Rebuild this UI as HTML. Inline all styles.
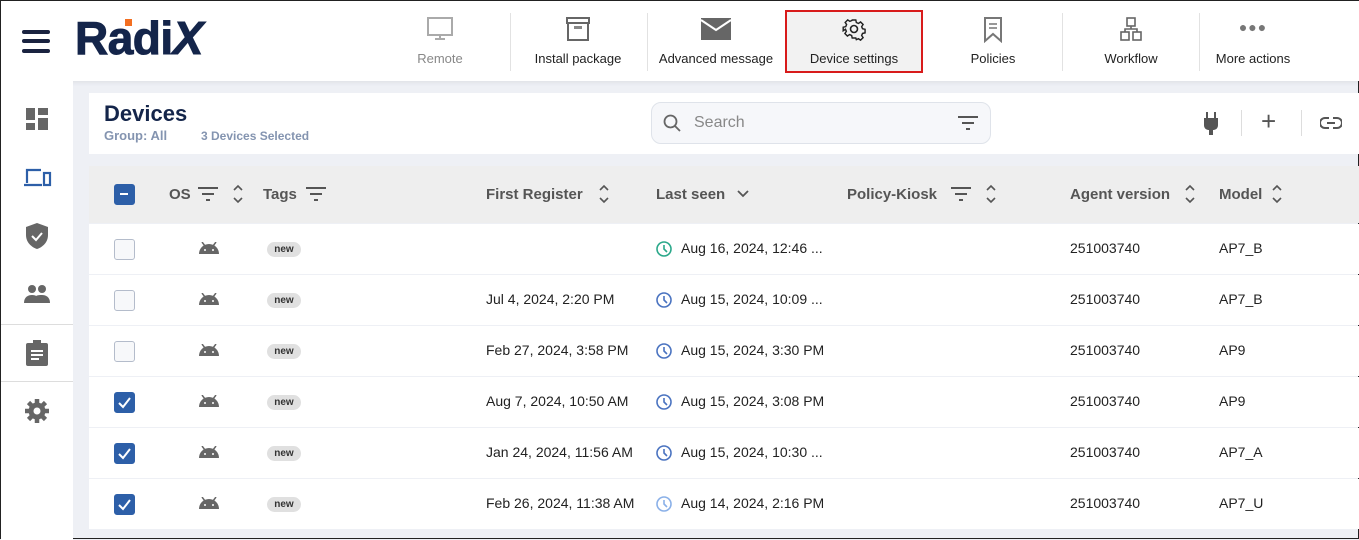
<!DOCTYPE html>
<html><head><style>
*{box-sizing:border-box;margin:0;padding:0}
body{width:1359px;height:539px;overflow:hidden;background:#eef0f5;font-family:"Liberation Sans",sans-serif;position:relative;border:1px solid #222}
.abs{position:absolute}
.top{left:0;top:0;width:1359px;height:80px;background:#fff;box-shadow:0 2px 4px rgba(0,0,0,.06)}
.nav{top:0;height:80px;text-align:center;font-size:13px;color:#222}
.nav span{position:absolute;top:50px;left:0;right:0}
.sep{top:12px;width:1px;height:58px;background:#e2e2e2}
.side{left:0;top:80px;width:72px;height:459px;background:#fff}
.card{left:88px;top:92px;width:1271px;height:61px;background:#fff}
.thead{left:88px;top:165px;width:1271px;height:57px;background:#eeeeee}
.th{top:185px;font-size:15px;font-weight:bold;color:#555}
.row{left:88px;width:1271px;height:50px;background:#fff}
.cell{font-size:14px;color:#222}
.cb{width:21px;height:21px;border:1.5px solid #b4bccb;border-radius:3px;background:#f7f8fa}
.cbc{background:#2d5fa8;border-color:#2d5fa8}
.badge{width:34px;height:15px;border-radius:8px;background:#e0e0e0;font-size:10px;font-weight:bold;text-align:center;line-height:15px;color:#333}
</style></head><body>
<div class="abs top"></div>
<div class="abs" style="left:21px;top:29px;width:28px;height:4px;background:#1a2340;border-radius:2px"></div>
<div class="abs" style="left:21px;top:38px;width:28px;height:4px;background:#1a2340;border-radius:2px"></div>
<div class="abs" style="left:21px;top:48px;width:28px;height:4px;background:#1a2340;border-radius:2px"></div>
<div class="abs" style="left:74px;top:12px;font-size:46px;line-height:50px;font-weight:bold;color:#14254a;letter-spacing:-0.5px;-webkit-text-stroke:1px #14254a">Radi<span style="font-style:italic">X</span></div>
<div class="abs" style="left:124px;top:18px;width:7px;height:7px;background:#f36f21"></div>

<div class="abs nav" style="left:379px;width:120px;color:#888"><svg class="abs" style="left:47px;top:16px" width="26" height="24" viewBox="0 0 26 24"><rect x="1" y="1" width="24" height="17" fill="none" stroke="#aaa" stroke-width="2"/><rect x="12" y="18" width="2" height="4" fill="#aaa"/><rect x="8" y="21" width="10" height="2" fill="#aaa"/></svg><span>Remote</span></div>
<div class="abs sep" style="left:509px"></div>
<div class="abs nav" style="left:517px;width:120px"><svg class="abs" style="left:48px;top:16px" width="24" height="24" viewBox="0 0 24 24"><rect x="1" y="1" width="22" height="5" fill="none" stroke="#666" stroke-width="2"/><rect x="2" y="6" width="20" height="17" fill="none" stroke="#666" stroke-width="2"/><rect x="8" y="9" width="8" height="3" fill="#888"/></svg><span>Install package</span></div>
<div class="abs sep" style="left:646px"></div>
<div class="abs nav" style="left:652px;width:126px"><svg class="abs" style="left:48px;top:17px" width="30" height="22" viewBox="0 0 30 22"><rect width="30" height="22" fill="#666"/><path d="M0 2 L15 12 L30 2" fill="none" stroke="#fff" stroke-width="2"/></svg><span>Advanced message</span></div>
<div class="abs" style="left:784px;top:9px;width:138px;height:63px;border:2px solid #d81b1b;background:#f2f2f2"></div>
<div class="abs nav" style="left:786px;width:134px"><svg class="abs" style="left:55px;top:16px" width="24" height="24" viewBox="0 0 24 24" fill="none" stroke="#222" stroke-width="1.6"><circle cx="12" cy="12" r="3.5"/><path d="M10 2h4l.6 2.8 2.3 1 2.4-1.6 2.8 2.8-1.6 2.4 1 2.3 2.8.6v4l-2.8.6-1 2.3 1.6 2.4-2.8 2.8-2.4-1.6-2.3 1L14 22h-4l-.6-2.8-2.3-1-2.4 1.6-2.8-2.8 1.6-2.4-1-2.3L-.0 14v-4l2.8-.6 1-2.3-1.6-2.4 2.8-2.8 2.4 1.6 2.3-1z" transform="translate(1.2 1.2) scale(.9)"/></svg><span>Device settings</span></div>
<div class="abs nav" style="left:932px;width:120px"><svg class="abs" style="left:50px;top:16px" width="20" height="26" viewBox="0 0 20 26"><path d="M2 1h16v23l-8-7-8 7z" fill="none" stroke="#777" stroke-width="2"/><path d="M6 7h8M6 11h8" stroke="#777" stroke-width="1.5"/></svg><span>Policies</span></div>
<div class="abs sep" style="left:1061px"></div>
<div class="abs nav" style="left:1070px;width:120px"><svg class="abs" style="left:48px;top:16px" width="24" height="24" viewBox="0 0 24 24" fill="none" stroke="#666" stroke-width="1.6"><rect x="8" y="1" width="8" height="8"/><rect x="2" y="15" width="8" height="8"/><rect x="14" y="15" width="8" height="8"/><path d="M12 9v3M6 15v-3h12v3"/></svg><span>Workflow</span></div>
<div class="abs sep" style="left:1198px"></div>
<div class="abs nav" style="left:1192px;width:120px"><div class="abs" style="left:0;right:0;top:18px;font-size:14px;color:#777;letter-spacing:1px">●●●</div><span>More actions</span></div>

<div class="abs side"></div>
<div class="abs" style="left:0;top:323px;width:72px;height:1px;background:#ddd"></div>
<div class="abs" style="left:0;top:380px;width:72px;height:1px;background:#ddd"></div>
<svg class="abs" style="left:25px;top:107px" width="22" height="22" viewBox="0 0 22 22" fill="#666"><rect x="0" y="0" width="9" height="12"/><rect x="12" y="0" width="10" height="7"/><rect x="0" y="15" width="9" height="7"/><rect x="12" y="10" width="10" height="12"/></svg>
<svg class="abs" style="left:23px;top:167px" width="28" height="20" viewBox="0 0 28 20" fill="none" stroke="#2d5fa8" stroke-width="2.2"><path d="M3 15V2h14"/><path d="M0 17h18"/><rect x="20" y="5" width="6" height="12"/></svg>
<svg class="abs" style="left:25px;top:222px" width="22" height="26" viewBox="0 0 22 26"><path d="M11 0L22 4v8c0 7-5 12-11 14C5 24 0 19 0 12V4z" fill="#666"/><path d="M6 13l4 4 6-7" stroke="#fff" stroke-width="2" fill="none"/></svg>
<svg class="abs" style="left:23px;top:284px" width="26" height="18" viewBox="0 0 26 18" fill="#666"><circle cx="8" cy="4" r="4"/><circle cx="18" cy="4" r="4"/><path d="M0 18c0-6 4-8 8-8s8 2 8 8zM14 18c1-4 0-6-2-7 2-1 4-1 6-1 4 0 8 2 8 8z"/></svg>
<svg class="abs" style="left:25px;top:339px" width="22" height="26" viewBox="0 0 22 26"><rect x="0" y="3" width="22" height="23" rx="2" fill="#666"/><rect x="7" y="0" width="8" height="6" fill="#666"/><path d="M5 11h12M5 15h12M5 19h8" stroke="#fff" stroke-width="2"/></svg>
<svg class="abs" style="left:24px;top:398px" width="24" height="24" viewBox="0 0 24 24"><circle cx="12" cy="12" r="8.5" fill="#666"/><g stroke="#666" stroke-width="4.5"><path d="M12 0v24M0 12h24M3.5 3.5l17 17M20.5 3.5l-17 17"/></g><circle cx="12" cy="12" r="3.5" fill="#fff"/></svg>

<div class="abs card"></div>
<div class="abs" style="left:103px;top:100px;font-size:22px;font-weight:bold;color:#14254a">Devices</div>
<div class="abs" style="left:103px;top:127px;font-size:13px;font-weight:bold;color:#8494b0">Group: All</div>
<div class="abs" style="left:200px;top:128px;font-size:12px;font-weight:bold;color:#8494b0">3 Devices Selected</div>
<div class="abs" style="left:650px;top:101px;width:340px;height:42px;border:1px solid #dfe3ea;border-radius:10px;background:#f6f7fa"></div>
<svg class="abs" style="left:662px;top:113px" width="18" height="18" viewBox="0 0 18 18" fill="none" stroke="#666" stroke-width="1.8"><circle cx="7.5" cy="7.5" r="6"/><path d="M12 12l5 5"/></svg>
<div class="abs" style="left:693px;top:113px;font-size:16px;color:#888">Search</div>
<svg class="abs" style="left:957px;top:114px" width="20" height="16" viewBox="0 0 20 16" stroke="#555" stroke-width="2"><path d="M0 2h20M4 8h12M8 14h4"/></svg>
<svg class="abs" style="left:1202px;top:111px" width="16" height="24" viewBox="0 0 16 24" fill="#555"><rect x="3" y="0" width="2" height="6"/><rect x="11" y="0" width="2" height="6"/><path d="M1 6h14v7c0 4-3 5-5 5v5H6v-5c-2 0-5-1-5-5z"/></svg>
<div class="abs" style="left:1240px;top:109px;width:1px;height:26px;background:#ddd"></div>
<div class="abs" style="left:1260px;top:105px;font-size:26px;color:#555">+</div>
<div class="abs" style="left:1300px;top:109px;width:1px;height:26px;background:#ddd"></div>
<svg class="abs" style="left:1319px;top:115px" width="22" height="14" viewBox="0 0 22 14" fill="none" stroke="#555" stroke-width="2"><path d="M9 2H5a5 5 0 000 10h4M13 2h4a5 5 0 010 10h-4M7 7h8"/></svg>

<div class="abs thead"></div>
<div class="abs cb cbc" style="left:113px;top:183px"><div class="abs" style="left:5px;top:8px;width:8px;height:2px;background:#fff"></div></div>
<div class="abs th" style="left:168px">OS</div>
<svg class="abs" style="left:197px;top:186px" width="20" height="14" stroke="#555" stroke-width="2"><path d="M0 1h20M4 7h12M8 13h4"/></svg>
<div class="abs th" style="left:262px">Tags</div>
<svg class="abs" style="left:305px;top:186px" width="20" height="14" stroke="#555" stroke-width="2"><path d="M0 1h20M4 7h12M8 13h4"/></svg>
<div class="abs th" style="left:485px">First Register</div>
<div class="abs th" style="left:655px">Last seen</div>
<svg class="abs" style="left:736px;top:189px" width="12" height="8" fill="none" stroke="#555" stroke-width="1.8"><path d="M1 1l5 5 5-5"/></svg>
<div class="abs th" style="left:846px">Policy-Kiosk</div>
<svg class="abs" style="left:950px;top:186px" width="20" height="14" stroke="#555" stroke-width="2"><path d="M0 1h20M4 7h12M8 13h4"/></svg>
<div class="abs th" style="left:1069px">Agent version</div>
<div class="abs th" style="left:1218px">Model</div>
<div id="sorts"></div>

<div id="rows"></div>
<script>
var s="";[232,598,985,1184,1271].forEach(function(x){s+='<svg class="abs" style="left:'+x+'px;top:183px" width="10" height="20" fill="none" stroke="#555" stroke-width="1.6"><path d="M1 6l4-4 4 4M1 14l4 4 4-4"/></svg>';});
document.getElementById("sorts").innerHTML=s;
var d=[["","Aug 16, 2024, 12:46 ...","AP7_B",0,"#2aa88a"],["Jul 4, 2024, 2:20 PM","Aug 15, 2024, 10:09 ...","AP7_B",0,"#4a73c0"],["Feb 27, 2024, 3:58 PM","Aug 15, 2024, 3:30 PM","AP9",0,"#4a73c0"],["Aug 7, 2024, 10:50 AM","Aug 15, 2024, 3:08 PM","AP9",1,"#4a73c0"],["Jan 24, 2024, 11:56 AM","Aug 15, 2024, 10:30 ...","AP7_A",1,"#4a73c0"],["Feb 26, 2024, 11:38 AM","Aug 14, 2024, 2:16 PM","AP7_U",1,"#8ab0e8"]];
var h="";d.forEach(function(r,i){var y=223+i*51;var c=y+25;
h+='<div class="abs row" style="top:'+y+'px"></div>';
h+='<div class="abs cb'+(r[3]?' cbc':'')+'" style="left:113px;top:'+(c-10)+'px">'+(r[3]?'<svg class="abs" style="left:3px;top:3px" width="13" height="13"><path d="M1 7l4 4 7-9" stroke="#fff" stroke-width="2" fill="none"/></svg>':'')+'</div>';
h+='<svg class="abs" style="left:197px;top:'+(c-7)+'px" width="22" height="12" viewBox="0 0 22 12"><path d="M1 12a10 10 0 0120 0z" fill="#666"/><path d="M4 0l3 4M18 0l-3 4" stroke="#666" stroke-width="1.5"/><circle cx="7" cy="8" r="1" fill="#fff"/><circle cx="15" cy="8" r="1" fill="#fff"/></svg>';
h+='<div class="abs badge" style="left:266px;top:'+(c-7)+'px">new</div>';
h+='<div class="abs cell" style="left:485px;top:'+(c-9)+'px">'+r[0]+'</div>';
h+='<svg class="abs" style="left:655px;top:'+(c-8)+'px" width="16" height="16" fill="none" stroke="'+r[4]+'" stroke-width="1.6"><circle cx="8" cy="8" r="7"/><path d="M8 4v4l3 3"/></svg>';
h+='<div class="abs cell" style="left:680px;top:'+(c-9)+'px">'+r[1]+'</div>';
h+='<div class="abs cell" style="left:1069px;top:'+(c-9)+'px">251003740</div>';
h+='<div class="abs cell" style="left:1218px;top:'+(c-9)+'px">'+r[2]+'</div>';});
document.getElementById("rows").innerHTML=h;
</script>
</body></html>
